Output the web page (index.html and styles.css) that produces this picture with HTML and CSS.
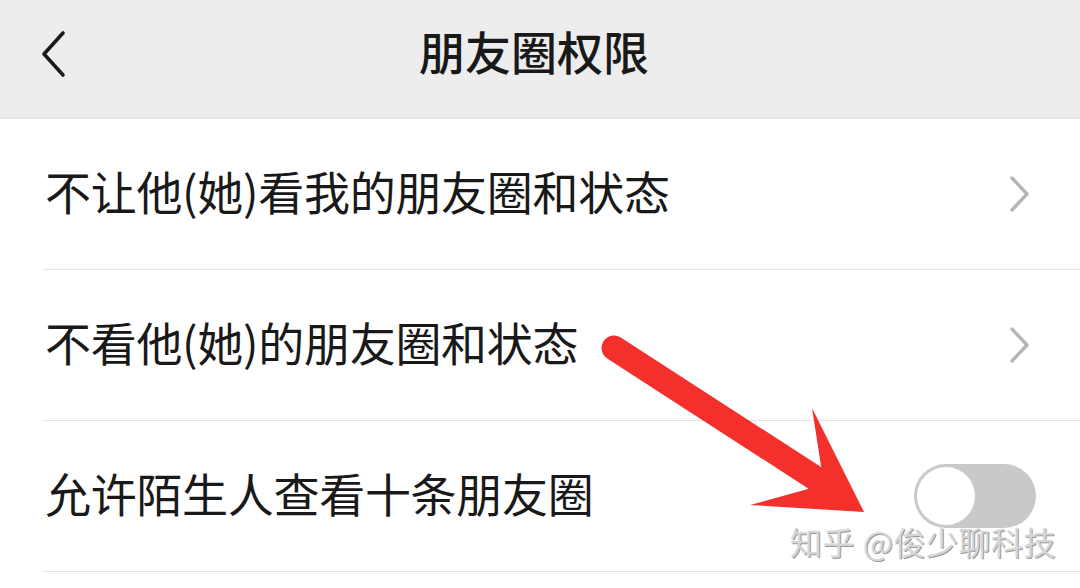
FILE: index.html
```html
<!DOCTYPE html>
<html lang="zh-CN">
<head>
  <meta charset="UTF-8" />
  <meta name="viewport" content="width=device-width, initial-scale=1.0"/>
  <title>朋友圈权限</title>
  <link rel="stylesheet" href="styles.css">
</head>
<body>
  <div class="page">
    <header class="nav">
      <svg class="back" width="30" height="48" viewBox="0 0 30 48">
        <polyline points="24,3 5,24 24,45" />
      </svg>
      <h1 class="nav-title">朋友圈权限</h1>
    </header>

    <ul class="list">
      <li class="row">
        <span class="label">不让他(她)看我的朋友圈和状态</span>
        <svg class="more" width="22" height="38" viewBox="0 0 22 38">
          <polyline points="3,3 18,19 3,35" />
        </svg>
      </li>
      <li class="row">
        <span class="label">不看他(她)的朋友圈和状态</span>
        <svg class="more" width="22" height="38" viewBox="0 0 22 38">
          <polyline points="3,3 18,19 3,35" />
        </svg>
      </li>
      <li class="row">
        <span class="label">允许陌生人查看十条朋友圈</span>
        <span class="switch"><span class="knob"></span></span>
      </li>
    </ul>

    <!-- annotation drawn over the screenshot -->
    <svg class="arrow" width="1080" height="588" viewBox="0 0 1080 588">
      <line x1="614" y1="348" x2="815" y2="478" />
      <polygon points="812,408 864,512 750,505 808,489 822,472" />
    </svg>

    <div class="watermark">知乎 @俊少聊科技</div>
  </div>
</body>
</html>
```

FILE: styles.css
```css
body {
  margin: 0;
  background: #fff;
  font-family: "Noto Sans CJK SC", "Noto Sans", sans-serif;
  color: #191919;
}
.page {
  position: relative;
  width: 1080px;
  height: 588px;
  overflow: hidden;
  background: #fff;
}
.nav {
  height: 117px;
  background: #ededed;
  border-bottom: 2px solid #e4e4e4;
  display: flex;
  align-items: center;
  justify-content: center;
  position: relative;
}
.back {
  position: absolute;
  left: 39px;
  top: 30px;
}
.back polyline {
  fill: none;
  stroke: #1a1a1a;
  stroke-width: 3.6;
  stroke-linecap: round;
  stroke-linejoin: round;
}
.nav-title {
  margin: 0 12px 18px 0;
  font-size: 46px;
  font-weight: 500;
  line-height: 1;
}
.list {
  list-style: none;
  margin: 0;
  padding: 0;
}
.row {
  height: 150px;
  margin-left: 43px;
  padding: 0 44px 0 2px;
  border-bottom: 1px solid #e3e3e3;
  display: flex;
  align-items: center;
  justify-content: space-between;
}
.label {
  font-size: 46px;
  letter-spacing: -0.3px;
  line-height: 1;
  padding-bottom: 8px;
}
.more {
  margin-right: 5px;
}
.more polyline {
  fill: none;
  stroke: #b5b5b5;
  stroke-width: 3.4;
  stroke-linecap: round;
  stroke-linejoin: round;
}
.switch {
  width: 122px;
  height: 64px;
  border-radius: 32px;
  background: #c9c9c9;
  display: flex;
  align-items: center;
  padding: 3px;
  box-sizing: border-box;
}
.knob {
  width: 58px;
  height: 58px;
  border-radius: 50%;
  background: #fff;
}
.arrow {
  position: absolute;
  left: 0;
  top: 0;
  pointer-events: none;
}
.arrow line {
  stroke: #f3302b;
  stroke-width: 25;
  stroke-linecap: round;
}
.arrow polygon {
  fill: #f3302b;
}
.watermark {
  position: absolute;
  left: 790px;
  top: 522px;
  font-size: 32px;
  line-height: 1.2;
  color: #d6d6d6;
  text-shadow: 1px 1px 0 #9a9a9a;
  letter-spacing: 0.5px;
}
```
